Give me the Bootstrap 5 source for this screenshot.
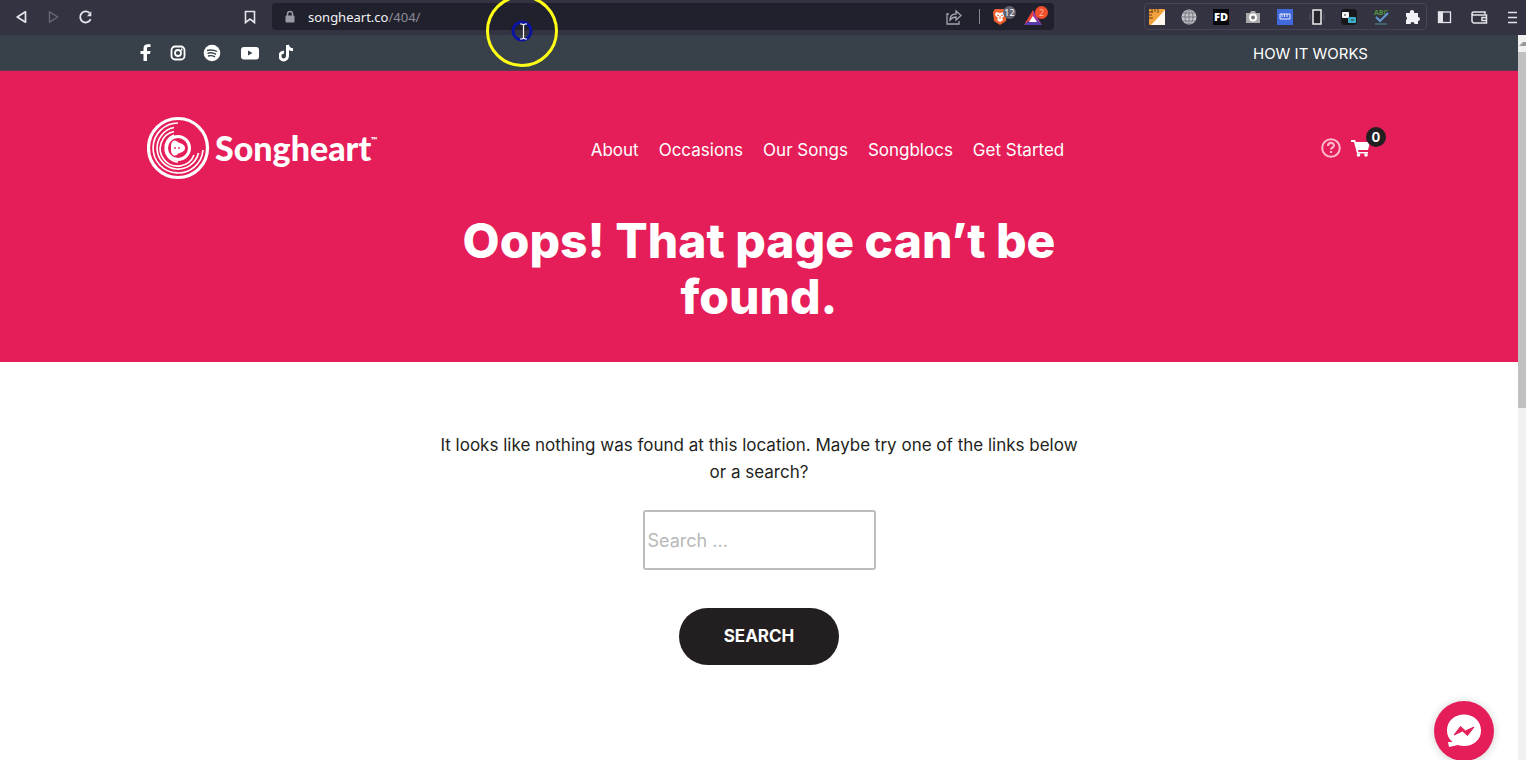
<!DOCTYPE html>
<html lang="en">
<head>
<meta charset="utf-8">
<meta name="viewport" content="width=device-width, initial-scale=1">
<title>Page not found – Songheart</title>
<link href="https://cdn.jsdelivr.net/npm/bootstrap@5.3.0/dist/css/bootstrap.min.css" rel="stylesheet">
<style>
:root{--pink:#e51e59;--slate:#38404a;--chrome:#333342;--ink:#231f20}
body{font-family:Inter,"Open Sans",sans-serif;color:var(--ink);background:#fff}
svg{display:block;flex:none}
button.plain{background:none;border:0;padding:0;color:inherit}
.chrome-bar{height:35px;background:var(--chrome);color:#e4e4ea;padding:0 8px 2px 14px}
.chrome-start{width:258px;padding-right:14px}
.chrome-end{width:82px}
.address{height:27px;background:#21212d;border-radius:4px;padding:0 4px 0 12px;margin-right:90px}
.divider{width:1px;height:15px;background:#85858f}
.url{font:13px "Noto Sans",sans-serif;color:#8c8c98}
.url b{font-weight:400;color:#f2f2f6}
.extensions{height:27px;border:1px solid #454557;border-radius:4px;padding:0 5px 0 4px;gap:16px;margin-right:9px}
.pip{position:absolute;left:11px;top:-2px;width:13px;height:13px;border-radius:50%;font:9px/13px "Noto Sans",sans-serif;text-align:center;color:#fff;background:#62626f}
.pip.hot{background:#f04e2c;color:#ffb59e}
.wrap{width:100%;max-width:1240px;margin:0 auto}
.topbar{height:36px;background:var(--slate);color:#fff;border-bottom:1px solid #5b3a50}
.topbar a,.hero a{color:#fff;text-decoration:none}
.how{font-size:15px;margin-right:11px;padding-top:3px}
.hero{background:var(--pink);color:#fff;padding:45px 0 37px}
.logo{width:240px}
.brandmark{font:900 34px/40px Lato,sans-serif}
.brandmark sup{font-size:8px;top:-18px}
.main-nav{gap:20px;padding:3px 52px 0 0;font-size:17px;line-height:24px}
.basket{position:relative;padding-right:7px}
.count{position:absolute;right:-7px;top:-10px;width:20px;height:20px;border-radius:50%;background:var(--ink);font-size:13px;line-height:20px;font-weight:700;text-align:center}
h1{font-size:48px;line-height:56px;font-weight:800;max-width:640px;margin:33px auto 0}
.lookup{max-width:640px;padding-top:70px;font-size:17px;line-height:27px}
.lookup input{width:233px;height:60px;border:2px solid #bdbdbd;border-radius:3px;padding:0 3px;font-size:18px}
.lookup input::placeholder{color:#b8b8b8}
.go{width:160px;height:57px;border:0;border-radius:29px;background:var(--ink);color:#fff;font-size:17px;font-weight:700;margin-top:38px}
.scroller{width:8px;background:#f1f1f1}
.scroller i{display:block;height:356px;background:#c1c1c1}
.chat{position:fixed;right:32px;bottom:-1px;width:60px;height:60px;border-radius:50%;background:var(--pink);box-shadow:0 1px 8px #0003}
.halo{position:absolute;left:486px;top:-5px;pointer-events:none}
</style>
</head>
<body class="min-vh-100 d-flex flex-column overflow-hidden">
<header class="chrome-bar d-flex align-items-center">
  <div class="chrome-start d-flex align-items-center">
    <button class="plain" aria-label="Back"><svg width="16" height="16" fill="none" stroke="currentColor" stroke-width="1.7" stroke-linejoin="round"><path d="M11.5 2.8v10.4L3.2 8z"/></svg></button>
    <button class="plain ms-3" aria-label="Forward"><svg width="16" height="16" fill="none" stroke="#686877" stroke-width="1.4" stroke-linejoin="round"><path d="M3.500 2.800v10.400L11.800 8z"/></svg></button>
    <button class="plain ms-3" aria-label="Reload"><svg width="16" height="16" fill="none" stroke="currentColor" stroke-width="1.8"><path d="M12.700 10.200A5.500 5.500 0 1 1 11.500 4"/><path d="M13.300 2.300v5H9z" fill="currentColor" stroke="none"/></svg></button>
    <button class="plain ms-auto" aria-label="Bookmark"><svg width="16" height="16" fill="none" stroke="currentColor" stroke-width="1.600"><path d="M3.500 2.500h9v11L8 10l-4.500 3.500z"/></svg></button>
  </div>
  <div class="address d-flex align-items-center flex-grow-1">
    <svg width="12" height="14"><rect x="1.500" y="5.500" width="9" height="7" rx="1" fill="#9999a5"/><path d="M3.500 6V4a2.500 2.500 0 0 1 5 0v2" fill="none" stroke="#9999a5" stroke-width="1.500"/></svg>
    <span class="url ms-2 ps-1 me-auto"><b>songheart.co</b>/404/</span>
    <button class="plain" aria-label="Share"><svg width="18" height="18" fill="none" stroke="#a5a5b0" stroke-width="1.300"><path d="M4 6H2v10h12v-3M5 12c0-4 2-6 6-6V3l5 4.500-5 4.500V9c-3 0-4.500 1-6 3z"/></svg></button>
    <span class="divider ms-3 me-2"></span>
    <button class="plain position-relative ms-1 me-3" aria-label="Shields"><svg width="16" height="18" viewBox="0 0 16 18"><path d="M3 1h10l2 3-1 9-6 4-6-4L1 4z" fill="#f4602e"/><path d="M4 4l4 1 4-1 1 3-3 3 1 2-3 2-3-2 1-2-3-3z" fill="#fff"/><path d="M5 7l2 .6M11 7l-2 .6M8 8v3" stroke="#f4602e"/></svg><span class="pip">12</span></button>
    <button class="plain position-relative me-2" aria-label="Rewards"><svg width="18" height="18" viewBox="0 0 18 18"><path d="M9 2L0 17h9z" fill="#f0443a"/><path d="M9 2l9 15H9z" fill="#a03a9c"/><path d="M0 17h18l-4-4H4z" fill="#5a3aa8"/><path d="M9 8l4 6H5z" fill="#fff"/></svg><span class="pip hot">2</span></button>
  </div>
  <div class="extensions d-flex align-items-center">
    <svg width="16" height="16"><rect width="16" height="16" rx="1" fill="#f3a23b"/><path d="M16 1v15H2z" fill="#fff8ec"/><path d="M0 3h4M0 6h3M0 9h4M3 0v4M6 0v3M9 0v4" stroke="#664018"/></svg>
    <svg width="16" height="16" fill="none" stroke="#777782"><circle cx="8" cy="8" r="7.500" fill="#c5c5c9" stroke="none"/><path d="M8 0v16M0 8h16M2 4h12M2 12h12"/><ellipse cx="8" cy="8" rx="4" ry="7.500"/></svg>
    <svg width="16" height="16"><rect width="16" height="16" fill="#08080c"/><text x="8" y="12" text-anchor="middle" font-family="Open Sans" font-weight="800" font-size="11" fill="#fff">FD</text></svg>
    <svg width="16" height="16"><path d="M1 4h4l1-2h4l1 2h4v10H1z" fill="#a9a9aa"/><circle cx="8" cy="8.500" r="3" fill="#777" stroke="#fff" stroke-width="2"/></svg>
    <svg width="16" height="16"><rect width="16" height="16" fill="#4169dc"/><path d="M3 5h10v5H3zM5 5v3M7.500 5v3M10 5v3" fill="none" stroke="#e8eeff"/></svg>
    <svg width="16" height="16"><rect x="4" y="1" width="8" height="14" fill="#25252e" stroke="#eee" stroke-width="1.500"/><path d="M1 5v6M15 5v6" stroke="#555560"/></svg>
    <svg width="16" height="16"><rect width="16" height="16" rx="4" fill="#17171c"/><rect x="1" y="3" width="7" height="6" rx="1" fill="#f5f5f5"/><rect x="7" y="8" width="8" height="6" rx="1" fill="#3eb0c8"/><path d="M4 5v2M10 11h3" stroke="#333"/></svg>
    <svg width="16" height="16"><text x="8" y="6" text-anchor="middle" font-family="Open Sans" font-weight="700" font-size="7" fill="#51913d">ABC</text><path d="M3 8l4 4 8-8" fill="none" stroke="#6297cf" stroke-width="2"/><path d="M2 15h12" stroke="#4d9090"/></svg>
    <svg width="16" height="16"><path d="M1 4h4a2.200 2.200 0 1 1 4 0h4v4a2 2 0 1 1 0 4v3H9.500a2 2 0 0 0-4 0H1v-4a2 2 0 0 0 0-3.500z" fill="#f2f2f6"/></svg>
  </div>
  <div class="chrome-end d-flex align-items-center justify-content-between">
    <button class="plain" aria-label="Sidebar"><svg width="16" height="16"><rect x="2.500" y="3" width="12" height="10.500" fill="none" stroke="currentColor" stroke-width="1.300"/><path d="M2 2.500h5v11.500H2z" fill="currentColor"/></svg></button>
    <button class="plain" aria-label="Wallet"><svg width="18" height="16" fill="none" stroke="currentColor" stroke-width="1.500"><path d="M15 5V3H3.500a1.500 1.500 0 0 0 0 3h13v8H3.500L2 12.500V4M16 8.500h-4v3h4"/></svg></button>
    <button class="plain" aria-label="Menu"><svg width="12" height="16" stroke="currentColor" stroke-width="1.500"><path d="M2 3.500h9M2 8.500h9M2 13.500h9"/></svg></button>
  </div>
</header>

<div class="d-flex flex-grow-1">
<div class="flex-grow-1">
  <div class="topbar">
    <div class="wrap d-flex align-items-center h-100">
      <a href="#" aria-label="Facebook"><svg width="14" height="20" fill="#fff"><path d="M4.500 18v-7H1.500V8h3V5.500C4.500 2.500 6.200 1.200 8.500 1.200h3V4h-2C8.200 4 8 4.600 8 5.500V8h3.500l-.5 3H8v7z"/></svg></a>
      <a href="#" class="ms-3" aria-label="Instagram"><svg width="18" height="18" fill="none" stroke="#fff" stroke-width="1.800"><rect x="2.500" y="2.500" width="13" height="13" rx="3.500"/><circle cx="9" cy="9" r="3"/><path d="M12 5.500h1.500"/></svg></a>
      <a href="#" class="ms-3" aria-label="Spotify"><svg width="18" height="18"><circle cx="9" cy="9" r="8.300" fill="#fff"/><path d="M4 6.500c4-1 7-.6 10 1M4.500 9.300c3-.9 6-.5 8.500 1M5 12c2.600-.7 5-.3 7 .8" fill="none" stroke="#38404a" stroke-width="1.400"/></svg></a>
      <a href="#" class="ms-3 ps-1" aria-label="YouTube"><svg width="18" height="18"><rect x="0" y="3" width="18" height="12.500" rx="3" fill="#fff"/><path d="M7 6.500v5l4.500-2.500z" fill="#38404a"/></svg></a>
      <a href="#" class="ms-3 ps-1" aria-label="TikTok"><svg width="16" height="18" fill="none" stroke="#fff" stroke-width="3"><path d="M8.500 1v11A3.800 3.800 0 1 1 5 8.300M8.500 1c.5 3 2 4.500 5.500 4.800"/></svg></a>
      <a href="#" class="how ms-auto">HOW IT WORKS</a>
    </div>
  </div>
  <section class="hero">
    <div class="wrap d-flex justify-content-between align-items-center ps-2">
      <a href="#" class="logo d-flex align-items-center" aria-label="Songheart home">
        <svg width="64" height="64" viewBox="0 0 64 64" fill="none" stroke="#fff"><circle cx="31" cy="32" r="29.500" stroke-width="3.200"/><g stroke-width="1.700"><path d="M31 7A25 25 0 1 0 56 34"/><path d="M27 11.500A21 21 0 1 0 51.500 37"/><path d="M27 15.500A17.500 17.500 0 1 0 47 39"/><path d="M27 19A14 14 0 0 0 31 46"/></g><circle cx="31" cy="32" r="11.500" stroke-width="3"/><path d="M26 25c2-1.500 4 0 5.500 1.500 2.500 1 6.500 2 6.500 5.500s-4 4.500-6.500 5.500C30 39 28 40.500 26 39s-2-4-2-7 0-5.500 2-7z" fill="#fff" stroke="none"/><circle cx="28" cy="32" r=".9" fill="#e51e59" stroke="none"/><circle cx="32" cy="32" r=".9" fill="#e51e59" stroke="none"/></svg>
        <span class="brandmark ms-1 text-nowrap">Songheart<sup>™</sup></span>
      </a>
      <nav class="main-nav d-flex"><a href="#">About</a><a href="#">Occasions</a><a href="#">Our Songs</a><a href="#">Songblocs</a><a href="#">Get Started</a></nav>
      <div class="d-flex align-items-center">
        <a href="#" class="me-2" aria-label="Help"><svg width="22" height="22" fill="none" stroke="#ffb5cb" stroke-width="2"><circle cx="11" cy="11" r="8.800"/><path d="M8 9c0-4 6-4 6-.500 0 2-3 2-3 4M11 14v2" stroke-width="2.200"/></svg></a>
        <a href="#" class="basket" aria-label="Cart"><svg width="22" height="22" fill="#fff"><path d="M1 3h4l1 2h14l-2 8H8l.5 2H18v1.500H7L4 5H1z"/><circle cx="8.500" cy="18" r="1.800"/><circle cx="16" cy="18" r="1.800"/></svg><span class="count">0</span></a>
      </div>
    </div>
    <h1 class="text-center">Oops! That page can’t be found.</h1>
  </section>
  <main class="lookup mx-auto text-center">
    <p class="mb-4">It looks like nothing was found at this location. Maybe try one of the links below or a search?</p>
    <form class="d-flex flex-column align-items-center" onsubmit="return false">
      <input type="search" aria-label="Search" placeholder="Search ...">
      <button class="go" type="submit">SEARCH</button>
    </form>
  </main>
</div>
<div class="scroller"><svg width="8" height="17"><path d="M1 11h7V7H5z" fill="#999"/></svg><i></i></div>
</div>

<button class="chat border-0 p-0" aria-label="Open chat"><svg class="mx-auto" width="36" height="36" viewBox="0 0 36 36"><path d="M18 1.500C8.500 1.500 1 8 1 17.500c0 5 2 8.700 5.500 11.500H2l1 5 9-2c2 .7 4 1 6 1 9.500 0 17-6 17-15.500S27.500 1.500 18 1.500z" fill="#fff"/><path d="M8 22l6.500-8.500 5 4.500 8.500-4-6.500 8.500-5-4.500z" fill="#e51e59" stroke="#e51e59" stroke-linejoin="round"/></svg></button>
<svg class="halo" width="72" height="72" fill="none"><circle cx="36" cy="36" r="34.500" stroke="#ffff16" stroke-width="3"/><circle cx="36" cy="36" r="9" stroke="#0a14a0" stroke-width="3"/><path d="M34 29h2l1.500 1 1.500-1h2M37.500 30v13M34 44h2l1.500-1 1.500 1h2" stroke="#fff" stroke-width="1.200"/></svg>
<script src="https://cdn.jsdelivr.net/npm/bootstrap@5.3.0/dist/js/bootstrap.bundle.min.js"></script>
</body>
</html>
